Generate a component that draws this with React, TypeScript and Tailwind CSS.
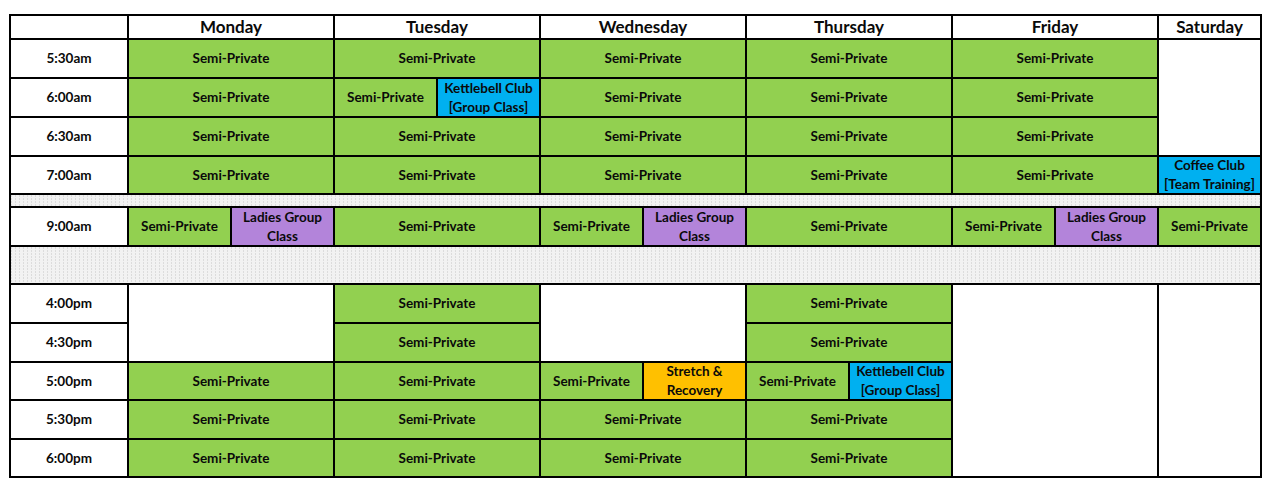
import React from "react";

const G = "bg-[#92d050]";
const B = "bg-[#00b0f0]";
const P = "bg-[#b384da]";
const O = "bg-[#ffc000]";
const W = "bg-white";

function C({ children, className = "" }: { children?: React.ReactNode; className?: string }) {
  return (
    <div className={`flex flex-col items-center justify-center text-center leading-[19px] ${className}`}>
      {children}
    </div>
  );
}

function Two({ a, b, className }: { a: string; b: string; className: string }) {
  return (
    <C className={className}>
      <span>{a}</span>
      <span>{b}</span>
    </C>
  );
}

function Time({ t }: { t: string }) {
  return <C className="bg-white">{t}</C>;
}

function SP({ half = false }: { half?: boolean }) {
  return <C className={`${G} ${half ? "" : "col-span-2"}`}>Semi-Private</C>;
}

function Gray() {
  return (
    <div className="col-span-12 bg-[#f2f2f2] bg-[linear-gradient(0deg,#f2f2f2_1px,transparent_1px),linear-gradient(90deg,#dcdcdc_1px,transparent_1px)] bg-[length:4px_3px]" />
  );
}

export default function App() {
  return (
    <div className="w-[1277px] h-[492px] bg-white pt-[14px] pl-[9px] font-['Lato','Open_Sans',sans-serif] font-bold text-[13.5px] text-[#0a0a0a]">
      <div className="inline-grid bg-black p-[2px] gap-[2px] grid-cols-[116px_101px_101px_101px_101px_101px_101px_101px_101px_101px_101px_101px] grid-rows-[22px_37px_37px_37px_36px_11px_37px_36px_37px_37px_36px_37px_36px]">
        {/* header */}
        <div className="bg-white" />
        {["Monday", "Tuesday", "Wednesday", "Thursday", "Friday"].map((d) => (
          <C key={d} className="bg-white col-span-2 text-[17px] leading-[22px]">{d}</C>
        ))}
        <C className="bg-white text-[17px] leading-[22px]">Saturday</C>

        {/* 5:30am */}
        <Time t="5:30am" />
        <SP /><SP /><SP /><SP /><SP />
        <div className="bg-white row-span-3" />

        {/* 6:00am */}
        <Time t="6:00am" />
        <SP />
        <SP half />
        <Two a="Kettlebell Club" b="[Group Class]" className={B} />
        <SP /><SP /><SP />

        {/* 6:30am */}
        <Time t="6:30am" />
        <SP /><SP /><SP /><SP /><SP />

        {/* 7:00am */}
        <Time t="7:00am" />
        <SP /><SP /><SP /><SP /><SP />
        <Two a="Coffee Club" b="[Team Training]" className={B} />

        <Gray />

        {/* 9:00am */}
        <Time t="9:00am" />
        <SP half />
        <Two a="Ladies Group" b="Class" className={P} />
        <SP />
        <SP half />
        <Two a="Ladies Group" b="Class" className={P} />
        <SP />
        <SP half />
        <Two a="Ladies Group" b="Class" className={P} />
        <SP half />

        <Gray />

        {/* 4:00pm */}
        <Time t="4:00pm" />
        <div className={`${W} col-span-2 row-span-2`} />
        <SP />
        <div className={`${W} col-span-2 row-span-2`} />
        <SP />
        <div className={`${W} col-span-2 row-span-5`} />
        <div className={`${W} row-span-5`} />

        {/* 4:30pm */}
        <Time t="4:30pm" />
        <SP />
        <SP />

        {/* 5:00pm */}
        <Time t="5:00pm" />
        <SP />
        <SP />
        <SP half />
        <Two a="Stretch &" b="Recovery" className={O} />
        <SP half />
        <Two a="Kettlebell Club" b="[Group Class]" className={B} />

        {/* 5:30pm */}
        <Time t="5:30pm" />
        <SP /><SP /><SP /><SP />

        {/* 6:00pm */}
        <Time t="6:00pm" />
        <SP /><SP /><SP /><SP />
      </div>
    </div>
  );
}
